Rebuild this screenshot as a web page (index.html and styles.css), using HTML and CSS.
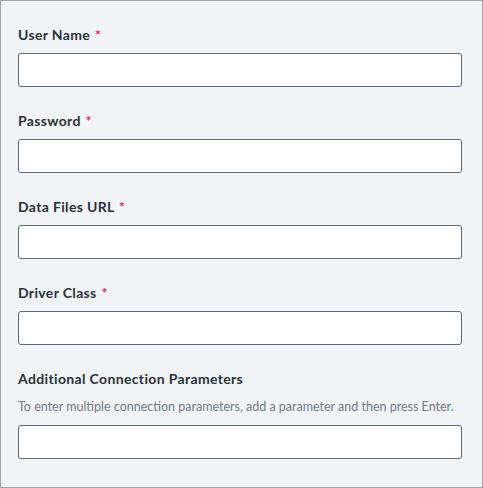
FILE: index.html
```html
<!DOCTYPE html>
<html>
<head>
<meta charset="utf-8">
<link rel="stylesheet" href="styles.css">
</head>
<body>
<div class="panel">
  <div class="field">
    <label class="label">User Name <span class="req">*</span></label>
    <div class="input"></div>
  </div>
  <div class="field">
    <label class="label">Password <span class="req">*</span></label>
    <div class="input"></div>
  </div>
  <div class="field">
    <label class="label">Data Files URL <span class="req">*</span></label>
    <div class="input"></div>
  </div>
  <div class="field">
    <label class="label">Driver Class <span class="req">*</span></label>
    <div class="input"></div>
  </div>
  <div class="field">
    <label class="label">Additional Connection Parameters</label>
    <div class="help">To enter multiple connection parameters, add a parameter and then press Enter.</div>
    <div class="input"></div>
  </div>
</div>
</body>
</html>
```
FILE: styles.css
```css
html, body {
  margin: 0;
  padding: 0;
}
body {
  font-family: Lato, "Liberation Sans", sans-serif;
}
.panel {
  box-sizing: border-box;
  width: 483px;
  height: 488px;
  border: 1px solid #a3a3a3;
  background: #f1f4f7;
  padding: 24px 20px 0 17px;
  display: flex;
  flex-direction: column;
  gap: 24px;
}
.field {
  display: flex;
  flex-direction: column;
  gap: 8px;
}
.label {
  font-size: 14px;
  line-height: 20px;
  font-weight: 700;
  letter-spacing: 0.35px;
  color: #2b3138;
}
.req {
  color: #e0245e;
  font-size: 14px;
  margin-left: 1px;
}
.help {
  font-size: 12.5px;
  line-height: 20px;
  color: #6f7a86;
}
.input {
  box-sizing: border-box;
  height: 34px;
  background: #ffffff;
  border: 1px solid #5c6877;
  border-radius: 3px;
}
```
